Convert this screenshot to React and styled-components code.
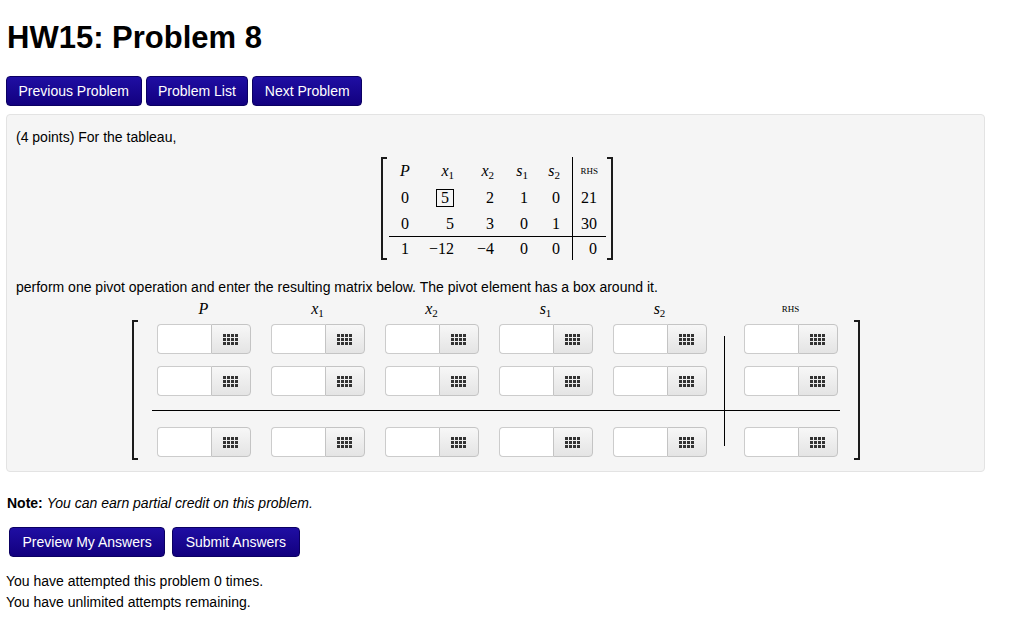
import React from 'react';
import styled, { createGlobalStyle } from 'styled-components';

const GlobalStyle = createGlobalStyle`
  body {
    margin: 0;
    background: #fff;
    color: #000;
    font-family: "Liberation Sans", Arial, Helvetica, sans-serif;
    font-size: 14px;
  }
`;

const Page = styled.div`
  padding: 0 6px;
`;

const Title = styled.h1`
  margin: 20px 0 0;
  padding-left: 1px;
  font-size: 31px;
  line-height: 36px;
  font-weight: bold;
`;

const ButtonRow = styled.div`
  display: flex;
  gap: ${props => props.$gap || 4}px;
  margin-top: ${props => props.$top || 0}px;
  margin-left: ${props => props.$left || 0}px;
`;

const BlueButton = styled.button`
  height: 30px;
  padding: 0 ${props => props.$pad || 11.5}px;
  border: 1px solid #0b0062;
  border-radius: 4px;
  background: linear-gradient(to bottom, #1f0ea3, #12007f);
  color: #fff;
  font-family: "Liberation Sans", Arial, sans-serif;
  font-size: 14px;
  cursor: pointer;
`;

const Panel = styled.div`
  box-sizing: border-box;
  width: 979px;
  margin-top: 8px;
  padding: 12px 9px 11px;
  background: #f5f5f5;
  border: 1px solid #e3e3e3;
  border-radius: 4px;
`;

const TextLine = styled.div`
  line-height: 20px;
  margin-top: ${props => props.$top || 0}px;
`;

const Center = styled.div`
  display: flex;
  justify-content: center;
  margin-top: ${props => props.$top || 0}px;
`;

const Bracketed = styled.div`
  display: flex;
  align-items: stretch;
  margin-left: ${props => props.$shift || 0}px;
`;

const Bracket = styled.div`
  box-sizing: border-box;
  width: 6px;
  border: 2px solid #1b1b1b;
  ${props => (props.$side === 'left' ? 'border-right: none;' : 'border-left: none;')}
  margin: ${props => props.$margin || '0'};
`;

/* given tableau */
const Tableau = styled.div`
  display: grid;
  grid-template-columns: 32px 33px 40px 34px 44px 34px;
  grid-template-rows: 28px 26px 25px 24px;
  margin-left: 2px;
  font-family: "Liberation Serif", "Times New Roman", serif;
  font-size: 16px;
`;

const TCell = styled.div`
  box-sizing: border-box;
  display: flex;
  align-items: center;
  justify-content: ${props => (props.$center ? 'center' : 'flex-end')};
  padding-right: ${props => props.$pr || 0}px;
  border-left: ${props => (props.$divider ? '1px solid #000' : 'none')};
  border-top: ${props => (props.$rule ? '1px solid #000' : 'none')};
`;

const Boxed = styled.span`
  display: inline-flex;
  align-items: center;
  justify-content: center;
  box-sizing: border-box;
  width: 18px;
  height: 18px;
  border: 1px solid #000;
`;

const Var = styled.span`
  font-style: italic;
  font-family: "Liberation Serif", "Times New Roman", serif;
  font-size: 16px;
`;

const Sub = styled.sub`
  font-style: normal;
  font-size: 11px;
  vertical-align: -3px;
  line-height: 0;
`;

const Rhs = styled.span`
  font-family: "Liberation Serif", "Times New Roman", serif;
  font-size: 9px;
`;

/* answer matrix */
const answerTemplate = '5px repeat(4, 94px 20px) 94px 17px 1px 19px 94px 2px';

const AnswerBlock = styled.div`
  display: flex;
  flex-direction: column;
`;

const HeaderGrid = styled.div`
  display: grid;
  grid-template-columns: ${answerTemplate};
  grid-template-rows: 23px;
  padding: 0 20px;
`;

const HeadCell = styled.div`
  grid-column: ${props => props.$col};
  display: flex;
  align-items: center;
  justify-content: center;
`;

const AnswerGrid = styled.div`
  display: grid;
  grid-template-columns: ${answerTemplate};
  grid-template-rows: 4px 30px 12px 30px 31px 30px 3px;
  margin: 0 14px;
`;

const Slot = styled.div`
  grid-column: ${props => props.$col};
  grid-row: ${props => props.$row};
`;

const HRule = styled.div`
  grid-column: 1 / -1;
  grid-row: 5;
  height: 1px;
  margin-top: 14px;
  background: #000;
`;

const VRule = styled.div`
  grid-column: 12;
  grid-row: 2 / 7;
  margin: 12px 0 11px;
  background: #000;
`;

const InputGroup = styled.div`
  display: flex;
  width: 94px;
  height: 30px;
`;

const Field = styled.input`
  box-sizing: border-box;
  width: 54px;
  height: 30px;
  margin: 0;
  padding: 4px 6px;
  border: 1px solid #ccc;
  border-right: none;
  border-radius: 4px 0 0 4px;
  background: #fff;
  font-size: 14px;
  outline: none;
`;

const Addon = styled.button`
  box-sizing: border-box;
  width: 40px;
  height: 30px;
  padding: 0;
  display: flex;
  align-items: center;
  justify-content: center;
  border: 1px solid #c4c4c4;
  border-radius: 0 4px 4px 0;
  background: linear-gradient(to bottom, #f7f7f7, #e4e4e4);
  cursor: pointer;
`;

const Note = styled.div`
  margin-top: 21px;
  margin-left: 1px;
  line-height: 20px;
  b { font-weight: bold; }
  i { font-style: italic; }
`;

const Attempts = styled.div`
  margin-top: 14px;
  line-height: 21px;
`;

const KeypadIcon = () => (
  <svg width="15" height="11" viewBox="0 0 15 11">
    {[0, 4, 8].map(y =>
      [0, 4, 8, 12].map(x => <rect key={`${x}-${y}`} x={x} y={y} width="3" height="3" fill="#333" />)
    )}
  </svg>
);

const AnswerInput = () => (
  <InputGroup>
    <Field type="text" />
    <Addon type="button" aria-label="Equation editor">
      <KeypadIcon />
    </Addon>
  </InputGroup>
);

const Label = ({ name, sub }) => (
  <Var>
    {name}
    {sub && <Sub>{sub}</Sub>}
  </Var>
);

const labels = [
  { name: 'P' },
  { name: 'x', sub: '1' },
  { name: 'x', sub: '2' },
  { name: 's', sub: '1' },
  { name: 's', sub: '2' },
];

const rows = [
  ['0', 'box5', '2', '1', '0', '21'],
  ['0', '5', '3', '0', '1', '30'],
  ['1', '\u221212', '\u22124', '0', '0', '0'],
];

const padFor = i => (i === 4 ? 12 : i === 5 ? 9 : 0);

const GivenTableau = () => (
  <Bracketed $shift={3}>
    <Bracket $side="left" />
    <Tableau>
      {labels.map((l, i) => (
        <TCell key={`h${i}`} $center={i === 0} $pr={padFor(i)}>
          <Label {...l} />
        </TCell>
      ))}
      <TCell $divider $pr={8}>
        <Rhs>RHS</Rhs>
      </TCell>
      {rows.map((row, r) =>
        row.map((v, i) => (
          <TCell key={`${r}-${i}`} $center={i === 0} $pr={padFor(i)} $divider={i === 5} $rule={r === 2}>
            {v === 'box5' ? <Boxed>5</Boxed> : v}
          </TCell>
        ))
      )}
    </Tableau>
    <Bracket $side="right" $margin="0 0 0 1px" />
  </Bracketed>
);

const AnswerMatrix = () => {
  const cols = [2, 4, 6, 8, 10, 14];
  const inputRows = [2, 4, 6];
  return (
    <AnswerBlock>
      <HeaderGrid>
        {labels.map((l, i) => (
          <HeadCell key={i} $col={cols[i]}>
            <Label {...l} />
          </HeadCell>
        ))}
        <HeadCell $col={14}>
          <Rhs>RHS</Rhs>
        </HeadCell>
      </HeaderGrid>
      <Bracketed>
        <Bracket $side="left" />
        <AnswerGrid>
          {inputRows.map(r =>
            cols.map(c => (
              <Slot key={`${r}-${c}`} $row={r} $col={c}>
                <AnswerInput />
              </Slot>
            ))
          )}
          <HRule />
          <VRule />
        </AnswerGrid>
        <Bracket $side="right" />
      </Bracketed>
    </AnswerBlock>
  );
};

export default function App() {
  return (
    <Page>
      <GlobalStyle />
      <Title>HW15: Problem 8</Title>
      <ButtonRow $top={20}>
        <BlueButton>Previous Problem</BlueButton>
        <BlueButton>Problem List</BlueButton>
        <BlueButton>Next Problem</BlueButton>
      </ButtonRow>
      <Panel>
        <TextLine>(4 points) For the tableau,</TextLine>
        <Center $top={10}>
          <GivenTableau />
        </Center>
        <TextLine $top={17}>
          perform one pivot operation and enter the resulting matrix below. The pivot element has a box around it.
        </TextLine>
        <Center>
          <AnswerMatrix />
        </Center>
      </Panel>
      <Note>
        <b>Note:</b> <i>You can earn partial credit on this problem.</i>
      </Note>
      <ButtonRow $top={14} $left={3} $gap={7}>
        <BlueButton $pad={12.5}>Preview My Answers</BlueButton>
        <BlueButton $pad={12.5}>Submit Answers</BlueButton>
      </ButtonRow>
      <Attempts>
        You have attempted this problem 0 times.
        <br />
        You have unlimited attempts remaining.
      </Attempts>
    </Page>
  );
}
